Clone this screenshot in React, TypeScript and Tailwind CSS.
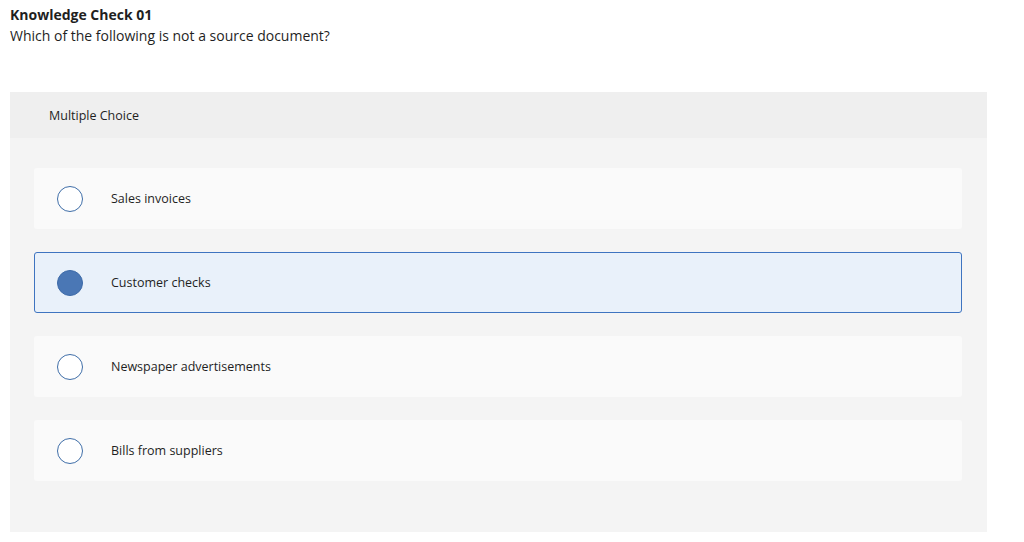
import React, { useState } from 'react';

const options = [
  'Sales invoices',
  'Customer checks',
  'Newspaper advertisements',
  'Bills from suppliers',
];

const App: React.FC = () => {
  const [selected, setSelected] = useState(1);

  return (
    <div className="min-h-screen bg-white text-[#1f1f1f]" style={{ fontFamily: '"Open Sans", Lato, sans-serif' }}>
      <div className="pl-[10px] pt-[6px]">
        <h1 className="text-[14px] font-bold leading-[18px]">Knowledge Check 01</h1>
        <p className="text-[14px] leading-[18px] mt-[3px]">Which of the following is not a source document?</p>
      </div>

      <div className="ml-[10px] mt-[47px] w-[977px] bg-[#f4f4f4] pb-[51px]">
        <div className="h-[46px] bg-[#efefef] flex items-center pl-[39px] pt-[2px] text-[12.5px]">Multiple Choice</div>
        <div className="pt-[30px] px-[24px] flex flex-col gap-[23px]">
          {options.map((label, i) => {
            const active = i === selected;
            return (
              <button
                key={label}
                onClick={() => setSelected(i)}
                className={`h-[61px] w-[928px] flex items-center text-left rounded-[3px] border ${
                  active ? 'bg-[#e9f1fa] border-[#3e74c0]' : 'bg-[#fafafa] border-transparent'
                }`}
              >
                <span
                  className={`ml-[22px] w-[26px] h-[26px] rounded-full border ${
                    active ? 'bg-[#4a77b5] border-[#3c6aa8]' : 'bg-white border-[#3f6ea8]'
                  }`}
                />
                <span className="ml-[28px] mt-[2px] text-[12.5px]">{label}</span>
              </button>
            );
          })}
        </div>
      </div>
    </div>
  );
};

export default App;
